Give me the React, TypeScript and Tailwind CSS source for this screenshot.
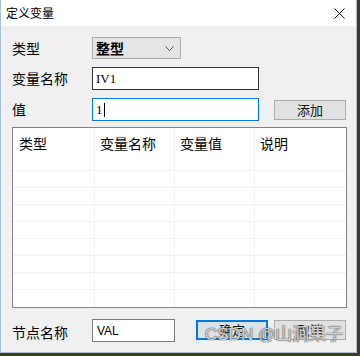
import React from "react";

const cjk = { fontFamily: '"Noto Sans CJK SC", "Microsoft YaHei", sans-serif' };

function Button({ label, focused = false }: { label: string; focused?: boolean }) {
  return (
    <div
      className={`w-[72px] h-[20px] flex items-center justify-center text-[13px] text-[#111] bg-[#e1e1e1] ${
        focused ? "border-2 border-[#0078d7]" : "border border-[#adadad]"
      }`}
      style={cjk}
    >
      {label}
    </div>
  );
}

export default function App() {
  const rows = Array.from({ length: 7 });

  return (
    <div className="w-[360px] h-[356px] bg-[#3d3b22] relative overflow-hidden">
      {/* dialog window */}
      <div className="w-[357px] h-[353px] border-x border-b border-[#a9c1da] bg-[#f0f0f0] flex flex-col">
        {/* title bar */}
        <div className="h-[26px] bg-white flex items-center justify-between pl-[5px] pr-[11px]">
          <span className="text-[12px] text-black" style={cjk}>定义变量</span>
          <svg width="11" height="11" viewBox="0 0 11 11" className="mt-[1px]">
            <path d="M0.5 0.5 L10.5 10.5 M10.5 0.5 L0.5 10.5" stroke="#111" strokeWidth="1" />
          </svg>
        </div>

        <div className="pl-[11px] flex flex-col">
          {/* type */}
          <div className="flex items-center mt-[11px] h-[22px]">
            <span className="w-[80px] text-[14px] text-black" style={cjk}>类型</span>
            <div className="w-[89px] h-[22px] bg-[#e5e5e5] border border-[#adadad] flex items-center justify-between pl-[3px] pr-[6px]">
              <span className="text-[14px] font-bold text-black" style={cjk}>整型</span>
              <svg width="9" height="5" viewBox="0 0 9 5">
                <path d="M0.5 0.5 L4.5 4.5 L8.5 0.5" stroke="#555" strokeWidth="1" fill="none" />
              </svg>
            </div>
          </div>

          {/* name */}
          <div className="flex items-center mt-[8px] h-[23px]">
            <span className="w-[80px] text-[14px] text-black" style={cjk}>变量名称</span>
            <div className="w-[167px] h-[23px] bg-white border border-[#333] flex items-center pl-[3px]">
              <span className="text-[13px] text-black" style={{ fontFamily: '"Liberation Serif", serif' }}>IV1</span>
            </div>
          </div>

          {/* value */}
          <div className="flex items-start mt-[8px] h-[23px]">
            <span className="w-[80px] text-[14px] text-black mt-[1px]" style={cjk}>值</span>
            <div className="w-[167px] h-[23px] bg-white border border-[#0078d7] flex items-center pl-[3px]">
              <span className="text-[13px] text-black" style={{ fontFamily: '"Liberation Serif", serif' }}>1</span>
              <span className="w-px h-[14px] bg-black ml-[1px]" />
            </div>
            <div className="ml-[15px] mt-[2px]">
              <Button label="添加" />
            </div>
          </div>

          {/* list view */}
          <div className="mt-[6px] w-[335px] h-[181px] bg-white border border-[#828282] relative overflow-hidden">
            <div className="h-[43px] border-b border-[#f0f0f0] flex">
              {["类型", "变量名称", "变量值", "说明"].map((h, i) => (
                <div
                  key={h}
                  className={`${i === 0 ? "w-[81px]" : i === 3 ? "flex-1" : "w-[80px]"} pl-[6px] pt-[5px] text-[14px] text-black`}
                  style={cjk}
                >
                  {h}
                </div>
              ))}
            </div>
            {rows.map((_, i) => (
              <div key={i} className="h-[17px] border-b border-[#f0f0f0]" />
            ))}
            {/* column lines */}
            <div className="absolute top-0 bottom-0 left-[81px] w-px bg-[#f0f0f0]" />
            <div className="absolute top-0 bottom-0 left-[161px] w-px bg-[#f0f0f0]" />
            <div className="absolute top-0 bottom-0 left-[241px] w-px bg-[#f0f0f0]" />
          </div>

          {/* bottom row */}
          <div className="flex items-start mt-[11px]">
            <span className="w-[80px] text-[14px] text-black mt-[3px]" style={cjk}>节点名称</span>
            <div className="w-[83px] h-[23px] bg-white border border-[#7a7a7a] flex items-center pl-[4px]">
              <span className="text-[12px] text-black" style={{ fontFamily: '"Liberation Sans", sans-serif' }}>VAL</span>
            </div>
            <div className="ml-[21px] mt-[1px]">
              <Button label="确定" focused />
            </div>
            <div className="ml-[6px] mt-[1px]">
              <Button label="取消" />
            </div>
          </div>
        </div>
      </div>

      {/* watermark */}
      <div
        className="absolute left-[205px] top-[326px] text-[17px] leading-none text-[rgba(255,255,255,0.75)] whitespace-nowrap"
        style={{
          fontFamily: '"Liberation Sans", "Noto Sans CJK SC", sans-serif',
          textShadow: "0 0 1px #555, 0 0 1px #555, 0 0 1px #777",
        }}
      >
        CSDN @山涧果子
      </div>
    </div>
  );
}
